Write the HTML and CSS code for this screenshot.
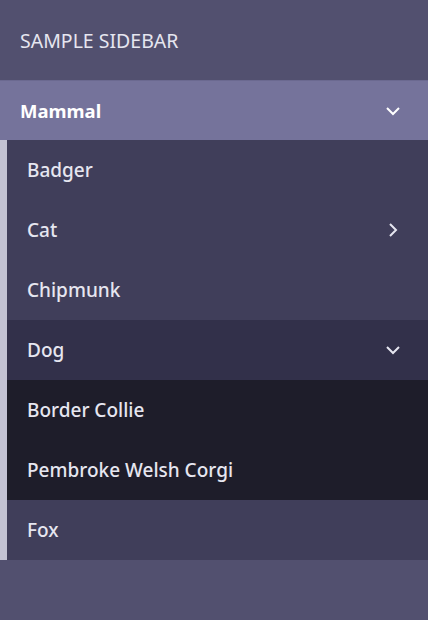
FILE: index.html
```html
<!DOCTYPE html>
<html lang="en">
<head>
    <meta charset="UTF-8">
    <meta name="viewport" content="width=device-width, initial-scale=1.0">
    <title>Sidebar</title>
    <link rel="stylesheet" href="styles.css">
</head>
<body>
    <div class="sidebar">
        <div class="sidebar_title">SAMPLE SIDEBAR</div>
        <div class="menu_item open">
            <span>Mammal</span>
            <svg class="arrow" width="16" height="16" viewBox="0 0 16 16"><path d="M2 5 L8 11 L14 5" fill="none" stroke="#fff" stroke-width="2"/></svg>
        </div>
        <div class="submenu">
            <div class="sub_item">Badger</div>
            <div class="sub_item">
                <span>Cat</span>
                <svg class="arrow" width="16" height="16" viewBox="0 0 16 16"><path d="M5 2 L11 8 L5 14" fill="none" stroke="#e6e6f0" stroke-width="2"/></svg>
            </div>
            <div class="sub_item">Chipmunk</div>
            <div class="sub_item active">
                <span>Dog</span>
                <svg class="arrow" width="16" height="16" viewBox="0 0 16 16"><path d="M2 5 L8 11 L14 5" fill="none" stroke="#e6e6f0" stroke-width="2"/></svg>
            </div>
            <div class="sub_sub">
                <div class="sub_item">Border Collie</div>
                <div class="sub_item">Pembroke Welsh Corgi</div>
            </div>
            <div class="sub_item">Fox</div>
        </div>
    </div>
</body>
</html>
```

FILE: styles.css
```css
*{
    margin:0;
    padding:0;
    box-sizing: border-box;
}
body {
    font-family: "Noto Sans", sans-serif;
    background-color: #52506f;
}
.sidebar {
    width: 428px;
    height: 620px;
    background-color: #52506f;
    color: #e6e6f0;
}
.sidebar_title {
    height: 80px;
    padding: 0 20px;
    display: flex;
    align-items: center;
    font-size: 19.5px;
}
.menu_item {
    height: 60px;
    padding: 0 27px 0 20px;
    display: flex;
    align-items: center;
    justify-content: space-between;
    background-color: #75739b;
    border-top: 1px solid #6b6990;
    color: #fff;
    font-weight: 700;
    font-size: 18.5px;
}
.submenu {
    border-left: 7px solid #c3c2d3;
    background-color: #403e5a;
}
.sub_item {
    height: 60px;
    padding: 0 27px 0 20px;
    display: flex;
    align-items: center;
    justify-content: space-between;
    font-size: 19px;
    font-weight: 500;
}
.sub_item.active {
    background-color: #32304a;
}
.sub_sub {
    background-color: #1e1d2a;
}
```
